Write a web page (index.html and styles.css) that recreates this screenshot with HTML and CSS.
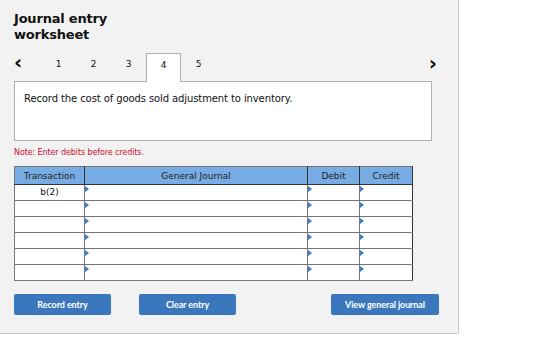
FILE: index.html
```html
<!DOCTYPE html>
<html lang="en">
<head>
    <meta charset="UTF-8">
    <title>Journal entry worksheet</title>
    <link rel="stylesheet" href="styles.css">
</head>
<body>
    <div class="panel">
        <h1>Journal entry<br>worksheet</h1>

        <div class="tabs">
            <span class="arrow">&lsaquo;</span>
            <span class="tab">1</span>
            <span class="tab">2</span>
            <span class="tab">3</span>
            <span class="tab active">4</span>
            <span class="tab">5</span>
            <span class="arrow next">&rsaquo;</span>
        </div>

        <div class="question">Record the cost of goods sold adjustment to inventory.</div>

        <div class="note">Note: Enter debits before credits.</div>

        <table class="journal">
            <thead>
                <tr>
                    <th class="col-tx">Transaction</th>
                    <th class="col-gj">General Journal</th>
                    <th class="col-dr">Debit</th>
                    <th class="col-cr">Credit</th>
                </tr>
            </thead>
            <tbody>
                <tr><td class="col-tx">b(2)</td><td class="col-gj mark"></td><td class="mark"></td><td class="mark"></td></tr>
                <tr><td class="col-tx"></td><td class="col-gj mark"></td><td class="mark"></td><td class="mark"></td></tr>
                <tr><td class="col-tx"></td><td class="col-gj mark"></td><td class="mark"></td><td class="mark"></td></tr>
                <tr><td class="col-tx"></td><td class="col-gj mark"></td><td class="mark"></td><td class="mark"></td></tr>
                <tr><td class="col-tx"></td><td class="col-gj mark"></td><td class="mark"></td><td class="mark"></td></tr>
                <tr><td class="col-tx"></td><td class="col-gj mark"></td><td class="mark"></td><td class="mark"></td></tr>
            </tbody>
        </table>

        <div class="actions">
            <button class="btn">Record entry</button>
            <button class="btn">Clear entry</button>
            <button class="btn wide">View general journal</button>
        </div>
    </div>
</body>
</html>
```

FILE: styles.css
```css
body {
    margin: 0;
    background-color: #fff;
    font-family: "DejaVu Sans", Verdana, sans-serif;
    color: #111;
}

.panel {
    width: 459px;
    height: 334px;
    box-sizing: border-box;
    background-color: #f2f2f2;
    border-right: 1px solid #c8c8c8;
    border-bottom: 1px solid #c8c8c8;
    padding: 11px 0 0 14px;
}

h1 {
    margin: 0;
    font-size: 13px;
    line-height: 16px;
    font-weight: bold;
    letter-spacing: -0.2px;
}

.tabs {
    display: flex;
    align-items: stretch;
    width: 423px;
    height: 28px;
    margin-top: 10px;
}

.arrow {
    width: 27px;
    font-size: 20px;
    line-height: 18px;
    font-weight: bold;
}

.arrow.next {
    margin-left: auto;
    width: auto;
    line-height: 20px;
}

.tab {
    width: 35px;
    box-sizing: border-box;
    text-align: center;
    font-size: 9px;
    line-height: 20px;
    padding-top: 1px;
}

.tab.active {
    background-color: #fff;
    border: 1px solid #b0b0b0;
    border-bottom: none;
    position: relative;
    z-index: 1;
    height: 29px;
}

.question {
    width: 418px;
    height: 60px;
    box-sizing: border-box;
    background-color: #fff;
    border: 1px solid #b0b0b0;
    padding: 10px 9px;
    font-size: 10px;
    line-height: 13px;
    letter-spacing: -0.1px;
}

.note {
    margin-top: 7px;
    font-size: 8px;
    line-height: 10px;
    letter-spacing: -0.1px;
    color: #c8102e;
}

.journal {
    margin-top: 8px;
    width: 398px;
    border-collapse: collapse;
    table-layout: fixed;
    font-size: 9px;
}

.journal th {
    height: 17px;
    padding: 0;
    background-color: #78ace4;
    font-weight: normal;
    color: #222;
    border: 1px solid #333;
    border-top-color: #777;
    border-left-color: #777;
}

.journal td {
    height: 15px;
    padding: 0;
    background-color: #fff;
    border: 1px solid #777;
    text-align: center;
    vertical-align: top;
    line-height: 14px;
}

.journal .col-tx { width: 69px; }
.journal .col-gj { width: 222px; }
.journal .col-dr { width: 51px; }
.journal .col-cr { width: 52px; }

.journal th.col-cr,
.journal td:last-child {
    border-right-color: #333;
}

.journal td.col-gj {
    border-left-color: #3f6fb5;
}

.journal td.mark {
    position: relative;
}

.journal td.mark::before {
    content: "";
    position: absolute;
    left: 0;
    top: 1px;
    border-top: 3px solid transparent;
    border-bottom: 3px solid transparent;
    border-left: 4px solid #3a7bd5;
}

.actions {
    display: flex;
    width: 425px;
    margin-top: 13px;
}

.btn {
    width: 97px;
    height: 21px;
    border: none;
    border-radius: 2px;
    background-color: #3b77bc;
    color: #fff;
    font-family: Lato, "Open Sans", sans-serif;
    font-weight: bold;
    font-size: 9px;
    letter-spacing: -0.1px;
    padding: 0;
}

.btn + .btn {
    margin-left: 28px;
}

.btn.wide {
    width: 108px;
    margin-left: auto;
}
```
